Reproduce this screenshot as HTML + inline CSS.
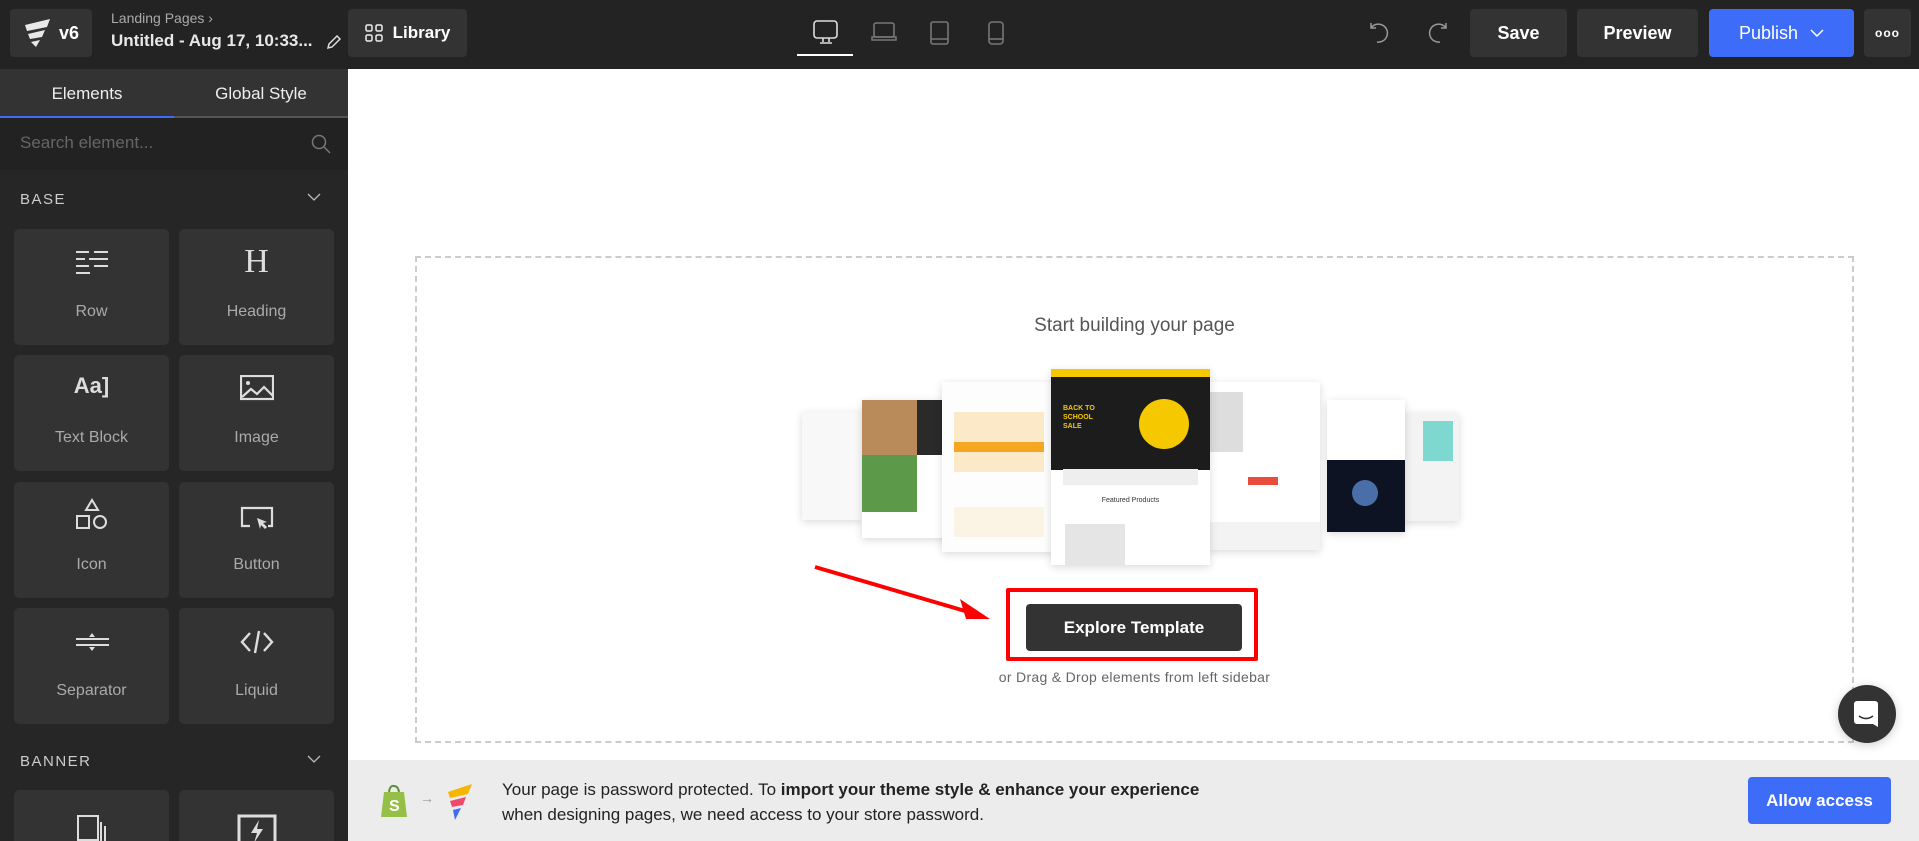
<!DOCTYPE html>
<html style="overflow:hidden;width:1919px;height:841px"><head><meta charset="utf-8"><style>
*{box-sizing:border-box;margin:0;padding:0}
body{width:1919px;height:841px;overflow:hidden;font-family:"Liberation Sans",sans-serif;background:#fff;position:relative}
.abs{position:absolute}
.top{left:0;top:0;width:1919px;height:69px;background:#232323}
.btn{position:absolute;background:#333;border-radius:4px;color:#fff;font-weight:bold;font-size:18px;display:flex;align-items:center;justify-content:center}
.side{left:0;top:69px;width:348px;height:772px;background:#262626;overflow:hidden}
.card{position:absolute;width:155px;height:116px;background:#333;border-radius:5px;color:#aaa;font-size:16px;text-align:center;overflow:hidden}
.card span{position:absolute;left:0;right:0;top:74px}
.card svg{position:absolute;left:61px;top:20px}
.sec{position:absolute;left:20px;color:#ccc;font-size:15px;letter-spacing:1.5px}
.tp{position:absolute;background:#fff;box-shadow:0 2px 8px rgba(0,0,0,.15);overflow:hidden}
</style></head><body>
<div class="abs top">
  <div class="btn" style="left:10px;top:9px;width:82px;height:48px">
    <svg width="28" height="28" viewBox="0 0 28 28" style="margin-right:8px"><path d="M2 6 L27 0 L24 8 L4 12Z M5 15 L22 11 L19 18 L7 20Z M8 23 L17 21 L13 28Z" fill="#e8e8e8"/></svg>v6</div>
  <div class="abs" style="left:111px;top:10px;color:#aaa;font-size:14px">Landing Pages &#8250;</div>
  <div class="abs" style="left:111px;top:31px;color:#e8e8e8;font-size:17px;font-weight:bold">Untitled - Aug 17, 10:33...</div>
  <svg class="abs" style="left:326px;top:34px" width="16" height="16" viewBox="0 0 16 16"><path d="M2 14 L3 10 L11 2 L14 5 L6 13Z" fill="none" stroke="#ddd" stroke-width="1.5"/></svg>
  <div class="btn" style="left:348px;top:9px;width:119px;height:48px;font-size:17px"><svg width="18" height="18" viewBox="0 0 18 18" style="margin-right:10px"><g fill="none" stroke="#eee" stroke-width="1.5"><rect x="1" y="1" width="6" height="6" rx="1.5"/><rect x="11" y="1" width="6" height="6" rx="1.5"/><rect x="1" y="11" width="6" height="6" rx="1.5"/><rect x="11" y="11" width="6" height="6" rx="1.5"/></g></svg>Library</div>
  <svg class="abs" style="left:813px;top:20px" width="26" height="25" viewBox="0 0 26 25"><g fill="none" stroke="#ddd" stroke-width="1.6"><rect x="1" y="1" width="23" height="17" rx="3"/><path d="M10 18v4M16 18v4M7 23h12"/></g></svg>
  <div class="abs" style="left:797px;top:54px;width:56px;height:2px;background:#fff"></div>
  <svg class="abs" style="left:871px;top:22px" width="26" height="21" viewBox="0 0 26 21"><g fill="none" stroke="#777" stroke-width="1.6"><rect x="3" y="1" width="20" height="14" rx="2"/><path d="M1 15h24v3H1z"/></g></svg>
  <svg class="abs" style="left:930px;top:21px" width="19" height="24" viewBox="0 0 19 24"><g fill="none" stroke="#777" stroke-width="1.6"><rect x="1" y="1" width="17" height="22" rx="2"/><path d="M1 18h17"/></g></svg>
  <svg class="abs" style="left:988px;top:21px" width="16" height="24" viewBox="0 0 16 24"><g fill="none" stroke="#777" stroke-width="1.6"><rect x="1" y="1" width="14" height="22" rx="3"/><path d="M1 18h14"/></g></svg>
  <svg class="abs" style="left:1367px;top:21px" width="24" height="24" viewBox="0 0 24 24"><path d="M4 7 A9 9 0 1 1 10 21 M4 2v5h5" fill="none" stroke="#999" stroke-width="1.5"/></svg>
  <svg class="abs" style="left:1426px;top:21px" width="24" height="24" viewBox="0 0 24 24"><path d="M20 7 A9 9 0 1 0 14 21 M20 2v5h-5" fill="none" stroke="#999" stroke-width="1.5"/></svg>
  <div class="btn" style="left:1470px;top:9px;width:97px;height:48px">Save</div>
  <div class="btn" style="left:1577px;top:9px;width:121px;height:48px">Preview</div>
  <div class="btn" style="left:1709px;top:9px;width:145px;height:48px;background:#3d6cf8;font-weight:normal;font-size:18px">Publish<svg width="14" height="8" viewBox="0 0 14 8" style="margin-left:12px"><path d="M1 1l6 6 6-6" fill="none" stroke="#fff" stroke-width="1.5"/></svg></div>
  <div class="btn" style="left:1864px;top:9px;width:47px;height:48px;font-size:12px;letter-spacing:1px">ooo</div>
</div>
<div class="abs side">
  <div class="abs" style="left:0;top:0;width:348px;height:48px;background:#333"></div>
  <div class="abs" style="left:0;top:15px;width:174px;text-align:center;color:#eee;font-size:17px">Elements</div>
  <div class="abs" style="left:174px;top:15px;width:174px;text-align:center;color:#eee;font-size:17px">Global Style</div>
  <div class="abs" style="left:0;top:47px;width:348px;height:2px;background:#555"></div>
  <div class="abs" style="left:0;top:47px;width:174px;height:2px;background:#3d6cf8"></div>
  <div class="abs" style="left:0;top:49px;width:348px;height:52px;background:#222"></div>
  <div class="abs" style="left:20px;top:64px;color:#666;font-size:17px">Search element...</div>
  <svg class="abs" style="left:311px;top:65px" width="20" height="20" viewBox="0 0 20 20"><g fill="none" stroke="#777" stroke-width="1.5"><circle cx="8" cy="8" r="6.5"/><path d="M13 13l6 6"/></g></svg>
  <div class="sec" style="top:122px">BASE</div>
  <svg class="abs" style="left:307px;top:124px" width="14" height="8" viewBox="0 0 14 8"><path d="M1 1l6 6 6-6" fill="none" stroke="#bbb" stroke-width="1.3"/></svg>
  <div class="card" style="left:14px;top:160px"><svg width="34" height="26" viewBox="0 0 34 26"><g stroke="#ddd" stroke-width="2"><path d="M1 3h13M19 3h14M1 10h9M14 10h19M1 17h13M19 17h14M1 24h14"/></g></svg><span>Row</span></div>
  <div class="card" style="left:179px;top:160px"><span style="top:14px;font-family:'Liberation Serif',serif;font-size:34px;color:#ddd">H</span><span>Heading</span></div>
  <div class="card" style="left:14px;top:286px"><span style="top:18px;font-size:22px;font-weight:bold;color:#ddd">Aa]</span><span>Text Block</span></div>
  <div class="card" style="left:179px;top:286px"><svg width="34" height="26" viewBox="0 0 34 26"><g fill="none" stroke="#ddd" stroke-width="2.2"><rect x="1" y="1" width="32" height="23"/><path d="M2 22l9-8 6 5 7-7 9 9"/></g><circle cx="8" cy="8" r="2" fill="#ddd"/></svg><span>Image</span></div>
  <div class="card" style="left:14px;top:413px"><svg width="34" height="32" viewBox="0 0 34 32" style="top:16px"><g fill="none" stroke="#ddd" stroke-width="2"><path d="M17 2l6 10H11z"/><rect x="2" y="18" width="12" height="12"/><circle cx="25" cy="24" r="6"/></g></svg><span>Icon</span></div>
  <div class="card" style="left:179px;top:413px"><svg width="34" height="26" viewBox="0 0 34 26" style="top:24px"><path d="M10 20H2V2h30v18h-4" fill="none" stroke="#ddd" stroke-width="2.2"/><path d="M17 12l10 4-4 1 4 4-2 2-4-4-1 4z" fill="#ddd"/></svg><span>Button</span></div>
  <div class="card" style="left:14px;top:539px"><svg width="34" height="20" viewBox="0 0 34 20" style="top:24px"><g stroke="#ddd" stroke-width="2"><path d="M1 7h33M1 13h33"/></g><path d="M14 5l3-4 3 4zM14 15l3 4 3-4z" fill="#ddd"/></svg><span>Separator</span></div>
  <div class="card" style="left:179px;top:539px"><svg width="34" height="24" viewBox="0 0 34 24" style="top:22px"><path d="M10 3L2 12l8 9M24 3l8 9-8 9M19 1l-4 22" fill="none" stroke="#ddd" stroke-width="2.4"/></svg><span>Liquid</span></div>
  <div class="sec" style="top:684px">BANNER</div>
  <svg class="abs" style="left:307px;top:686px" width="14" height="8" viewBox="0 0 14 8"><path d="M1 1l6 6 6-6" fill="none" stroke="#bbb" stroke-width="1.3"/></svg>
  <div class="card" style="left:14px;top:721px;height:51px;border-radius:5px 5px 0 0"><svg width="34" height="34" viewBox="0 0 34 34" style="left:62px;top:24px"><g fill="none" stroke="#ddd" stroke-width="2"><rect x="2" y="2" width="20" height="24"/><path d="M25 8v21H8M29 12v21H12"/></g></svg></div>
  <div class="card" style="left:179px;top:721px;height:51px;border-radius:5px 5px 0 0"><svg width="40" height="34" viewBox="0 0 40 34" style="left:58px;top:24px"><rect x="2" y="2" width="36" height="30" fill="none" stroke="#ddd" stroke-width="3"/><path d="M22 6l-8 13h6l-3 10 9-14h-6z" fill="#ddd"/></svg></div>
</div>
<div class="abs" style="left:415px;top:256px;width:1439px;height:487px;border:2px dashed #ccc"></div>
<div class="abs" style="left:415px;top:315px;width:1439px;text-align:center;color:#555;font-size:19px">Start building your page</div>
<div class="tp" style="left:802px;top:412px;width:60px;height:108px;background:#f8f8f8"></div>
<div class="tp" style="left:1403px;top:413px;width:56px;height:108px;background:#f3f3f3"><div style="position:absolute;left:20px;top:8px;width:30px;height:40px;background:#7fd8d0"></div></div>
<div class="tp" style="left:862px;top:400px;width:88px;height:138px"><div style="position:absolute;left:0;top:0;width:55px;height:55px;background:#b98a5a"></div><div style="position:absolute;left:0;top:55px;width:55px;height:57px;background:#5c9a4a"></div><div style="position:absolute;left:55px;top:0;width:33px;height:55px;background:#2a2a2a"></div></div>
<div class="tp" style="left:1327px;top:400px;width:78px;height:132px"><div style="position:absolute;left:0;top:60px;width:78px;height:72px;background:#0e1324"></div><div style="position:absolute;left:25px;top:80px;width:26px;height:26px;border-radius:50%;background:#4a6fa8"></div></div>
<div class="tp" style="left:942px;top:382px;width:112px;height:170px;background:#fdfdfd"><div style="position:absolute;left:12px;top:30px;width:90px;height:60px;background:#fbe9c8"></div><div style="position:absolute;left:12px;top:60px;width:90px;height:10px;background:#f5a623"></div><div style="position:absolute;left:12px;top:125px;width:90px;height:30px;background:#fbf3e4"></div></div>
<div class="tp" style="left:1208px;top:382px;width:112px;height:168px"><div style="position:absolute;left:0;top:10px;width:35px;height:60px;background:#ddd"></div><div style="position:absolute;left:40px;top:95px;width:30px;height:8px;background:#e74c3c"></div><div style="position:absolute;left:0;top:140px;width:112px;height:28px;background:#f3f3f3"></div></div>
<div class="tp" style="left:1051px;top:369px;width:159px;height:196px"><div style="position:absolute;left:0;top:0;width:159px;height:8px;background:#f5c800"></div><div style="position:absolute;left:0;top:8px;width:159px;height:93px;background:#1c1c1c"></div><div style="position:absolute;left:88px;top:30px;width:50px;height:50px;border-radius:50%;background:#f5c800"></div><div style="position:absolute;left:12px;top:35px;width:45px;height:30px;color:#f5c800;font-size:7px;font-weight:bold;line-height:9px">BACK TO SCHOOL SALE</div><div style="position:absolute;left:12px;top:100px;width:135px;height:16px;background:#eee"></div><div style="position:absolute;left:0;top:128px;width:159px;text-align:center;font-size:7px;color:#333">Featured Products</div><div style="position:absolute;left:14px;top:155px;width:60px;height:41px;background:#e5e5e5"></div></div>
<svg class="abs" style="left:800px;top:555px" width="200" height="80" viewBox="0 0 200 80"><path d="M15 12 L172 58" stroke="#f00" stroke-width="4"/><path d="M190 64 L160 44 L166 64z" fill="#f00"/></svg>
<div class="abs" style="left:1006px;top:588px;width:252px;height:73px;border:4px solid #f00;border-radius:2px"></div>
<div class="btn" style="left:1026px;top:604px;width:216px;height:47px;font-size:17px">Explore Template</div>
<div class="abs" style="left:415px;top:669px;width:1439px;text-align:center;color:#666;font-size:14px;letter-spacing:.3px">or Drag &amp; Drop elements from left sidebar</div>
<div class="abs" style="left:1838px;top:685px;width:58px;height:58px;border-radius:50%;background:#333;box-shadow:0 2px 10px rgba(0,0,0,.2)"><svg width="26" height="26" viewBox="0 0 26 26" style="position:absolute;left:16px;top:16px"><path d="M3 0h18a3 3 0 0 1 3 3v23l-5-3H3a3 3 0 0 1-3-3V3a3 3 0 0 1 3-3z" fill="#fff"/><path d="M5 15q7 5 14 0" fill="none" stroke="#333" stroke-width="1.6"/></svg></div>
<div class="abs" style="left:348px;top:760px;width:1571px;height:81px;background:#ececec"></div>
<svg class="abs" style="left:380px;top:784px" width="30" height="34" viewBox="0 0 30 34"><path d="M4 8h20l3 25H1z" fill="#95bf47"/><path d="M9 8q1-7 5-6 4 0 5 6" fill="none" stroke="#5e8e3e" stroke-width="2"/><text x="9" y="27" font-size="16" font-weight="bold" fill="#fff" font-family="Liberation Sans">S</text></svg>
<div class="abs" style="left:420px;top:790px;color:#999;font-size:14px">&#8594;</div>
<svg class="abs" style="left:446px;top:784px" width="28" height="38" viewBox="0 0 28 38"><path d="M2 8 L26 0 L22 10 L4 14Z" fill="#f7b500"/><path d="M4 17 L20 13 L17 21 L6 23Z" fill="#ef4a6b"/><path d="M7 26 L15 24 L9 36Z" fill="#3d6cf8"/></svg>
<div class="abs" style="left:502px;top:777px;color:#222;font-size:17px;line-height:25px">Your page is password protected. To <b>import your theme style &amp; enhance your experience</b><br>when designing pages, we need access to your store password.</div>
<div class="btn" style="left:1748px;top:777px;width:143px;height:47px;background:#3d6cf8;font-size:17px">Allow access</div>
</body></html>
